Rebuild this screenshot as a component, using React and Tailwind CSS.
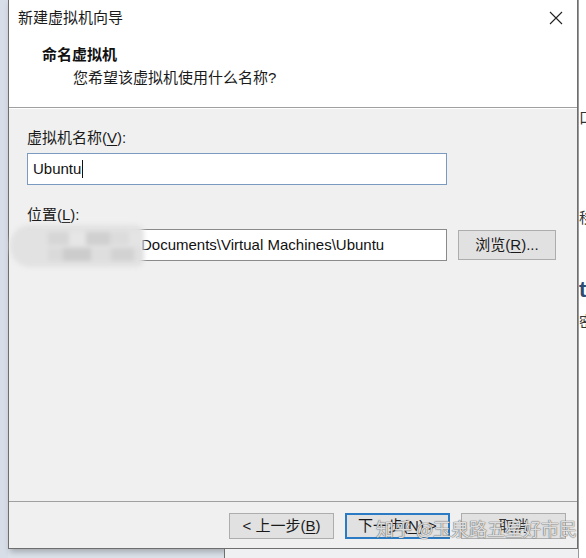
import React from "react";

const ui = { fontFamily: '"Liberation Sans", "Noto Sans CJK SC", sans-serif' };

function Accel({ children }) {
  return <span className="underline underline-offset-2">{children}</span>;
}

function Button({ children, primary, size = "h-[26px] w-[105px]", tone = "text-[#1a1a1a]" }) {
  return (
    <div
      className={
        "flex shrink-0 items-center justify-center text-[15px] bg-[#e1e1e1] " +
        size +
        " " +
        tone +
        " " +
        (primary ? "border-2 border-[#2a7bc4]" : "border border-[#adadad]")
      }
    >
      {children}
    </div>
  );
}

export default function App() {
  return (
    <div className="relative flex h-[558px] w-[586px] overflow-hidden bg-[#dbe2ea]" style={ui}>
      {/* backdrop, left */}
      <div className="w-[8px] shrink-0 bg-[#d8dee7]" />

      {/* wizard window */}
      <div className="flex h-[549px] w-[570px] shrink-0 flex-col border-x border-b border-[#6e6e6e] bg-[#f0f0f0] shadow-[2px_3px_6px_rgba(0,0,0,0.25)]">
        {/* title bar + header */}
        <div className="flex h-[108px] flex-col border-b border-[#a0a0a0] bg-white">
          <div className="flex h-[36px] items-center justify-between pl-[9px] pr-[12px]">
            <span className="text-[15px] text-[#1a1a1a]">新建虚拟机向导</span>
            <svg width="14" height="14" viewBox="0 0 14 14" className="mr-[2px]">
              <path d="M1 1L13 13M13 1L1 13" stroke="#222" strokeWidth="1.1" fill="none" />
            </svg>
          </div>
          <div className="mt-[9px] pl-[33px] text-[15px] font-bold leading-[20px] text-[#111]">命名虚拟机</div>
          <div className="mt-[3px] pl-[64px] text-[15px] leading-[20px] text-[#1a1a1a]">您希望该虚拟机使用什么名称?</div>
        </div>

        {/* form body */}
        <div className="relative flex flex-1 flex-col border-t border-white px-[18px] pt-[19px]">
          <div className="text-[15px] leading-[19px] text-[#1a1a1a]">
            虚拟机名称(<Accel>V</Accel>):
          </div>
          <div className="mt-[6px] flex h-[32px] w-[420px] items-center border border-[#7a9ac0] bg-white pl-[5px] text-[15px] text-[#111]">
            Ubuntu
            <span className="ml-[1px] h-[18px] w-px bg-[#111]" />
          </div>

          <div className="mt-[20px] text-[15px] leading-[19px] text-[#1a1a1a]">
            位置(<Accel>L</Accel>):
          </div>
          <div className="mt-[5px] flex items-center gap-[11px]">
            <div className="flex h-[32px] w-[420px] shrink-0 items-center border border-[#8a8a8a] bg-white pl-[113px] text-[15px] text-[#111]">
              Documents\Virtual Machines\Ubuntu
            </div>
            <Button size="h-[30px] w-[98px]">
              浏览(<Accel>R</Accel>)...
            </Button>
          </div>

          {/* obscured path prefix */}
          <div className="absolute left-[1px] top-[116px] h-[42px] w-[134px] rounded-l-[20px] rounded-r-[8px] bg-[#e2e2e2] blur-[2px]">
            <div className="ml-[38px] mt-[7px] flex">
              <div className="h-[13px] w-[24px] bg-[#d6d6d6]" />
              <div className="h-[13px] w-[20px] bg-[#e6e6e6]" />
              <div className="h-[13px] w-[28px] bg-[#d0d0d0]" />
              <div className="h-[13px] w-[22px] bg-[#dcdcdc]" />
              <div className="h-[13px] w-[18px] bg-[#e4e4e4]" />
            </div>
            <div className="ml-[38px] mt-[3px] flex">
              <div className="h-[13px] w-[18px] bg-[#dadada]" />
              <div className="h-[13px] w-[32px] bg-[#cccccc]" />
              <div className="h-[13px] w-[24px] bg-[#dedede]" />
              <div className="h-[13px] w-[26px] bg-[#d2d2d2]" />
              <div className="h-[13px] w-[12px] bg-[#e0e0e0]" />
            </div>
          </div>
        </div>

        {/* footer */}
        <div className="flex h-[47px] items-start justify-end gap-[11px] border-t border-[#a0a0a0] pr-[11px] pt-[11px]">
          <Button>
            &lt; 上一步(<Accel>B</Accel>)
          </Button>
          <Button primary>
            下一步(<Accel>N</Accel>) &gt;
          </Button>
          <Button tone="text-[#333]">取消</Button>
        </div>
      </div>

      {/* backdrop, right: edge of another window */}
      <div className="flex w-[8px] shrink-0 flex-col overflow-hidden border-l border-[#9a9a9a] bg-white text-[15px] leading-[20px] text-[#333]">
        <span className="mt-[108px] whitespace-nowrap">口</span>
        <span className="mt-[80px] whitespace-nowrap">移</span>
        <span className="mt-[52px] whitespace-nowrap text-[22px] font-bold text-[#2f4b6e]">t</span>
        <span className="mt-[12px] whitespace-nowrap">密</span>
      </div>

      {/* backdrop below window */}
      <div className="absolute bottom-0 left-[224px] h-[9px] w-[354px] border-l border-[#6e6e6e] bg-[#eef0f2]" />

      {/* watermark */}
      <div
        className="absolute left-[376px] top-[515px] whitespace-nowrap text-[18px] text-white/80 [text-shadow:0_0_1px_#555,0_0_1px_#555]"
        style={{ fontFamily: '"Noto Sans CJK SC", sans-serif' }}
      >
        知乎 @玉泉路五星好市民
      </div>
    </div>
  );
}
